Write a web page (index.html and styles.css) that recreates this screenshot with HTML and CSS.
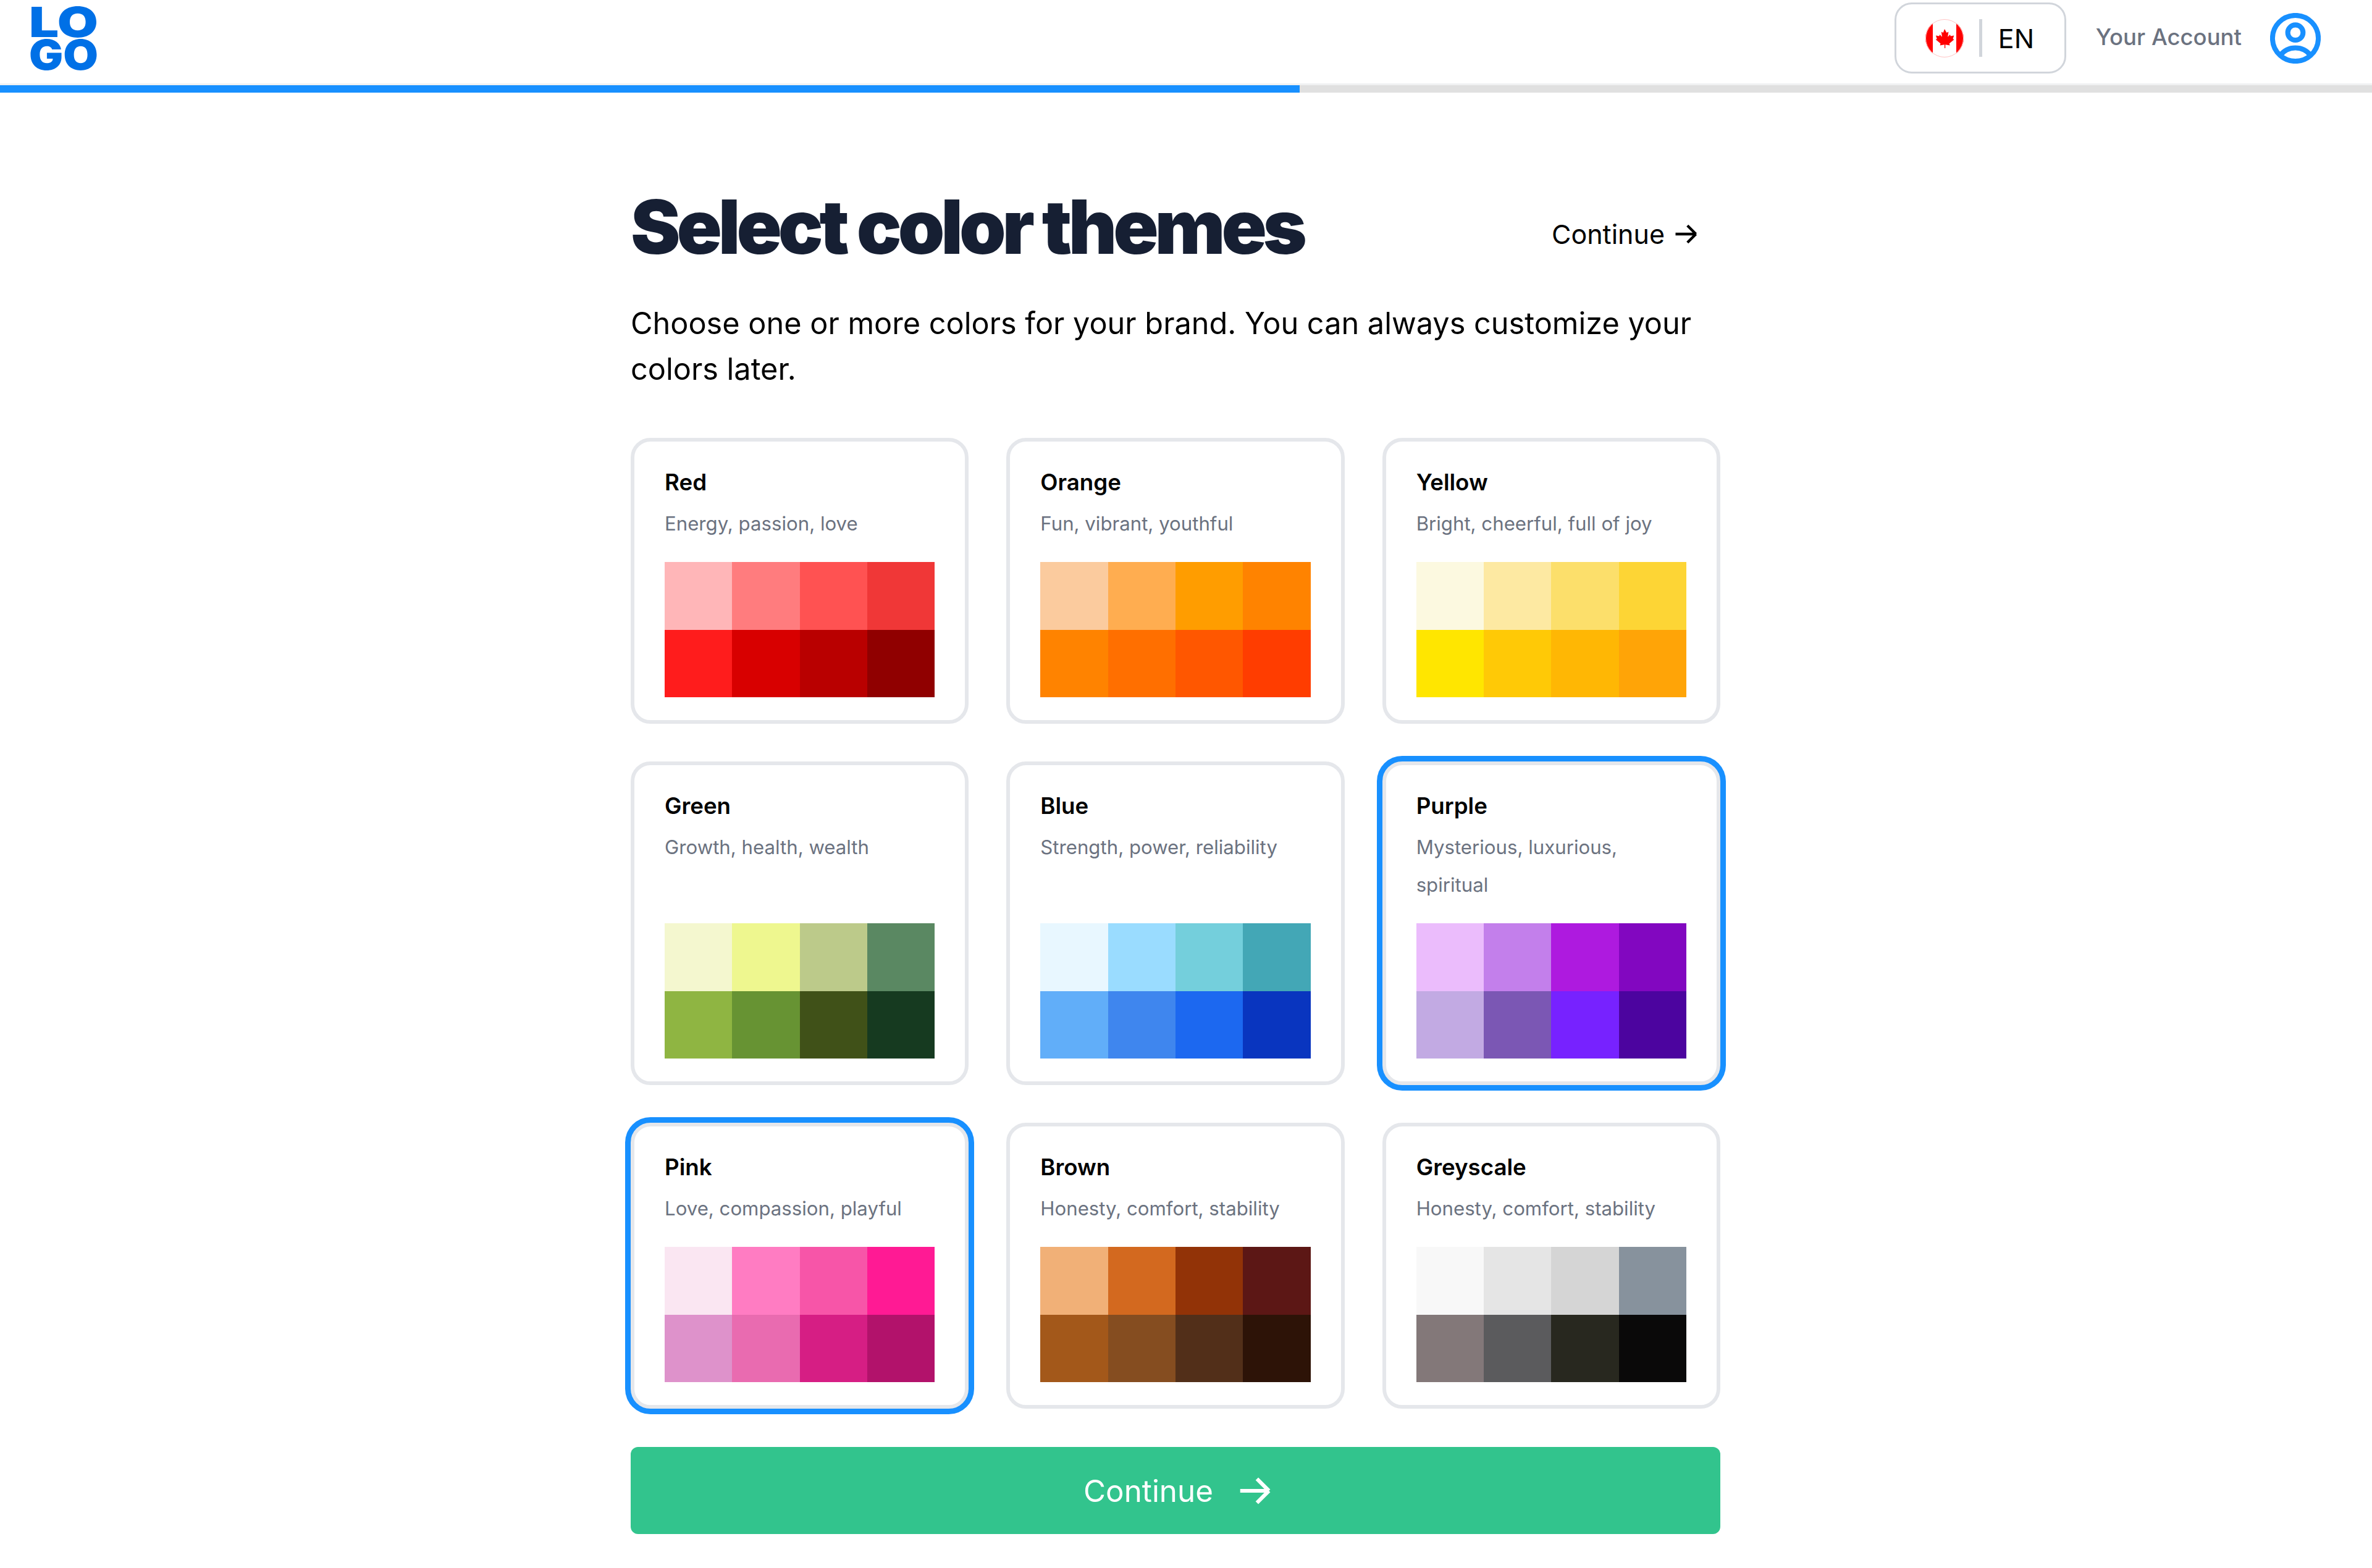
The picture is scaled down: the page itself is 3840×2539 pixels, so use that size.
FILE: index.html
```html
<!DOCTYPE html>
<html lang="en">
<head>
    <meta charset="UTF-8">
    <meta name="viewport" content="width=device-width, initial-scale=1.0">
    <title>Select color themes</title>
    <link rel="stylesheet" href="styles.css">
</head>
<body>
    <header class="topbar">
        <svg class="logo" viewBox="0 0 125 135">
            <text x="6" y="60" textLength="112" lengthAdjust="spacingAndGlyphs">LO</text>
            <text x="6" y="113" textLength="112" lengthAdjust="spacingAndGlyphs">GO</text>
        </svg>
        <div class="topbar__right">
            <button class="lang">
                <svg class="lang__flag" viewBox="0 0 62 62">
                    <defs><clipPath id="flagclip"><circle cx="31" cy="31" r="31"/></clipPath></defs>
                    <g clip-path="url(#flagclip)">
                        <rect width="62" height="62" fill="#fff"/>
                        <rect width="12" height="62" fill="#f00"/>
                        <rect x="50" width="12" height="62" fill="#f00"/>
                    </g>
                    <circle cx="31" cy="31" r="30.5" fill="none" stroke="#ffc4c4" stroke-width="1"/>
                    <path fill="#f00" d="M31 16l3.4 6 3-1.5-1.2 8.2 3.7-3.6 1 2.4 5.4-1-1.8 5.6 2 1-7.800 6.500.9 2.800-7.300-1.100v5.700h-1.400v-5.700l-7.300 1.100.9-2.800-7.800-6.500 2-1-1.800-5.600 5.400 1 1-2.400 3.700 3.600-1.200-8.200 3 1.500z"/>
                </svg>
                <span class="lang__sep"></span>
                <span class="lang__code">EN</span>
            </button>
            <span class="account">Your Account</span>
            <svg class="avatar" viewBox="2.05 2.05 19.9 19.9" fill="none" stroke="#1890ff" stroke-width="1.95">
                <path d="M17.982 18.725A7.488 7.488 0 0012 15.75a7.488 7.488 0 00-5.982 2.975m11.964 0a9 9 0 10-11.963 0m11.963 0A8.966 8.966 0 0112 21a8.966 8.966 0 01-5.982-2.275M15 9.750a3 3 0 11-6 0 3 3 0 016 0z"/>
            </svg>
        </div>
    </header>
    <div class="progress"><div class="progress__bar"></div></div>

    <main class="content">
        <div class="content__head">
            <h1>Select color themes</h1>
            <a class="skip">Continue
                <svg viewBox="0 0 24 24" fill="none" stroke="currentColor" stroke-width="2.4"><path d="M13.5 4.5L21 12m0 0l-7.500 7.500M21 12H3"/></svg>
            </a>
        </div>
        <p class="lead">Choose one or more colors for your brand. You can always customize your colors later.</p>

        <div class="themes">
            <div class="theme theme--red">
                <h3>Red</h3>
                <p>Energy, passion, love</p>
                <div class="swatch"><i></i><i></i><i></i><i></i><i></i><i></i><i></i><i></i></div>
            </div>
            <div class="theme theme--orange">
                <h3>Orange</h3>
                <p>Fun, vibrant, youthful</p>
                <div class="swatch"><i></i><i></i><i></i><i></i><i></i><i></i><i></i><i></i></div>
            </div>
            <div class="theme theme--yellow">
                <h3>Yellow</h3>
                <p>Bright, cheerful, full of joy</p>
                <div class="swatch"><i></i><i></i><i></i><i></i><i></i><i></i><i></i><i></i></div>
            </div>
            <div class="theme theme--green">
                <h3>Green</h3>
                <p>Growth, health, wealth</p>
                <div class="swatch"><i></i><i></i><i></i><i></i><i></i><i></i><i></i><i></i></div>
            </div>
            <div class="theme theme--blue">
                <h3>Blue</h3>
                <p>Strength, power, reliability</p>
                <div class="swatch"><i></i><i></i><i></i><i></i><i></i><i></i><i></i><i></i></div>
            </div>
            <div class="theme theme--purple selected">
                <h3>Purple</h3>
                <p>Mysterious, luxurious, spiritual</p>
                <div class="swatch"><i></i><i></i><i></i><i></i><i></i><i></i><i></i><i></i></div>
            </div>
            <div class="theme theme--pink selected">
                <h3>Pink</h3>
                <p>Love, compassion, playful</p>
                <div class="swatch"><i></i><i></i><i></i><i></i><i></i><i></i><i></i><i></i></div>
            </div>
            <div class="theme theme--brown">
                <h3>Brown</h3>
                <p>Honesty, comfort, stability</p>
                <div class="swatch"><i></i><i></i><i></i><i></i><i></i><i></i><i></i><i></i></div>
            </div>
            <div class="theme theme--grey">
                <h3>Greyscale</h3>
                <p>Honesty, comfort, stability</p>
                <div class="swatch"><i></i><i></i><i></i><i></i><i></i><i></i><i></i><i></i></div>
            </div>
        </div>

        <button class="continue">Continue
            <svg viewBox="0 0 24 24" fill="none" stroke="currentColor" stroke-width="2.4"><path d="M13.5 4.500L21 12m0 0l-7.500 7.500M21 12H3"/></svg>
        </button>
    </main>
</body>
</html>
```

FILE: styles.css
```css
* {
    box-sizing: border-box;
}
body {
    margin: 0;
    background: #ffffff;
    font-family: "Inter", "Liberation Sans", sans-serif;
    color: #000000;
}
.topbar {
    height: 135px;
    display: flex;
    align-items: flex-start;
    justify-content: space-between;
    padding: 0 83px 0 41px;
}
.logo {
    width: 125px;
    height: 135px;
    font-size: 68px;
    font-weight: 900;
    fill: #0070e6;
}
.topbar__right {
    display: flex;
    align-items: center;
    padding-top: 4px;
}
.lang {
    width: 278px;
    height: 115px;
    display: flex;
    align-items: center;
    padding: 0 0 0 47px;
    border: 3px solid #d1d5db;
    border-radius: 28px;
    background: #ffffff;
    font-family: inherit;
}
.lang__flag {
    width: 62px;
    height: 62px;
}
.lang__sep {
    width: 5px;
    height: 61px;
    margin: 0 26px 0 25px;
    background: #d1d5db;
}
.lang__code {
    font-size: 43px;
    color: #000000;
}
.account {
    margin: 0 0 3px 48px;
    font-size: 36.5px;
    font-weight: 500;
    color: #6b7280;
}
.avatar {
    width: 82px;
    height: 82px;
    margin-left: 46px;
}
.progress {
    height: 15px;
    border-top: 3px solid #f0f1f2;
    background: #e0e0e0;
}
.progress__bar {
    width: 2104px;
    height: 12px;
    background: #1890ff;
}
.content {
    width: 1764px;
    margin-left: 1021px;
    padding-top: 152px;
}
.content__head {
    display: flex;
    align-items: center;
    justify-content: space-between;
    padding-right: 34px;
}
.content__head h1 {
    margin: 0;
    font-size: 121px;
    line-height: 130px;
    font-weight: 900;
    letter-spacing: -6.1px;
    color: #161f33;
}
.skip {
    display: flex;
    align-items: center;
    gap: 12px;
    margin-top: 23px;
    font-size: 43px;
}
.skip svg {
    width: 44px;
    height: 44px;
}
.lead {
    margin: 55px 0 0;
    font-size: 48.65px;
    line-height: 73.5px;
}
.themes {
    display: grid;
    grid-template-columns: repeat(3, 1fr);
    gap: 61px;
    margin-top: 75px;
}
.theme {
    display: flex;
    flex-direction: column;
    padding: 44px 49px 37px;
    border: 6px solid #e5e7eb;
    border-radius: 32px;
    background: #ffffff;
}
.theme.selected {
    box-shadow: 0 0 0 9px #1890ff;
}
.theme h3 {
    margin: 0 0 15px;
    font-size: 36.7px;
    line-height: 44px;
    font-weight: 600;
}
.theme p {
    margin: 0 0 31px;
    font-size: 31.2px;
    line-height: 61px;
    color: #6b7280;
}
.swatch {
    display: grid;
    grid-template-columns: repeat(4, 1fr);
    grid-template-rows: 109.500px 109.500px;
    margin-top: auto;
}
.continue {
    display: flex;
    align-items: center;
    justify-content: center;
    gap: 36px;
    width: 100%;
    height: 141px;
    margin-top: 62px;
    padding-left: 16px;
    border: none;
    border-radius: 12px;
    background: #32c48d;
    color: #ffffff;
    font-family: inherit;
    font-size: 49.3px;
}
.continue svg {
    width: 62px;
    height: 62px;
}

/* palettes */
.theme--red i:nth-child(1) { background: #ffb6b8; }
.theme--red i:nth-child(2) { background: #ff7c7e; }
.theme--red i:nth-child(3) { background: #ff5252; }
.theme--red i:nth-child(4) { background: #f03737; }
.theme--red i:nth-child(5) { background: #ff1c1c; }
.theme--red i:nth-child(6) { background: #d80000; }
.theme--red i:nth-child(7) { background: #b90000; }
.theme--red i:nth-child(8) { background: #900000; }

.theme--orange i:nth-child(1) { background: #fbcb9e; }
.theme--orange i:nth-child(2) { background: #ffad50; }
.theme--orange i:nth-child(3) { background: #ff9d00; }
.theme--orange i:nth-child(4) { background: #ff8300; }
.theme--orange i:nth-child(5) { background: #ff8300; }
.theme--orange i:nth-child(6) { background: #ff6f00; }
.theme--orange i:nth-child(7) { background: #ff5700; }
.theme--orange i:nth-child(8) { background: #ff3d00; }

.theme--yellow i:nth-child(1) { background: #fcf9e0; }
.theme--yellow i:nth-child(2) { background: #fde9a2; }
.theme--yellow i:nth-child(3) { background: #fcdf6b; }
.theme--yellow i:nth-child(4) { background: #fdd535; }
.theme--yellow i:nth-child(5) { background: #ffe600; }
.theme--yellow i:nth-child(6) { background: #ffc906; }
.theme--yellow i:nth-child(7) { background: #ffb704; }
.theme--yellow i:nth-child(8) { background: #ffa407; }

.theme--green i:nth-child(1) { background: #f4f7cf; }
.theme--green i:nth-child(2) { background: #eef78f; }
.theme--green i:nth-child(3) { background: #bcca8a; }
.theme--green i:nth-child(4) { background: #5a8862; }
.theme--green i:nth-child(5) { background: #8fb542; }
.theme--green i:nth-child(6) { background: #679333; }
.theme--green i:nth-child(7) { background: #405118; }
.theme--green i:nth-child(8) { background: #163a20; }

.theme--blue i:nth-child(1) { background: #e8f7ff; }
.theme--blue i:nth-child(2) { background: #9adcff; }
.theme--blue i:nth-child(3) { background: #74cfdc; }
.theme--blue i:nth-child(4) { background: #43a7b6; }
.theme--blue i:nth-child(5) { background: #61aef9; }
.theme--blue i:nth-child(6) { background: #3f86ee; }
.theme--blue i:nth-child(7) { background: #1c68f0; }
.theme--blue i:nth-child(8) { background: #0935bf; }

.theme--purple i:nth-child(1) { background: #ebbcfc; }
.theme--purple i:nth-child(2) { background: #c37feb; }
.theme--purple i:nth-child(3) { background: #ae1adf; }
.theme--purple i:nth-child(4) { background: #8207c0; }
.theme--purple i:nth-child(5) { background: #c2aae3; }
.theme--purple i:nth-child(6) { background: #7b57b4; }
.theme--purple i:nth-child(7) { background: #7722ff; }
.theme--purple i:nth-child(8) { background: #4c049f; }

.theme--pink i:nth-child(1) { background: #fae6f2; }
.theme--pink i:nth-child(2) { background: #ff7cc2; }
.theme--pink i:nth-child(3) { background: #f755a8; }
.theme--pink i:nth-child(4) { background: #ff1a94; }
.theme--pink i:nth-child(5) { background: #de92cb; }
.theme--pink i:nth-child(6) { background: #e96bb0; }
.theme--pink i:nth-child(7) { background: #d61e84; }
.theme--pink i:nth-child(8) { background: #b2126b; }

.theme--brown i:nth-child(1) { background: #f1b077; }
.theme--brown i:nth-child(2) { background: #d3691f; }
.theme--brown i:nth-child(3) { background: #923307; }
.theme--brown i:nth-child(4) { background: #5c1715; }
.theme--brown i:nth-child(5) { background: #a3581a; }
.theme--brown i:nth-child(6) { background: #854d20; }
.theme--brown i:nth-child(7) { background: #522f19; }
.theme--brown i:nth-child(8) { background: #2d1307; }

.theme--grey i:nth-child(1) { background: #f8f8f8; }
.theme--grey i:nth-child(2) { background: #e5e5e5; }
.theme--grey i:nth-child(3) { background: #d5d5d5; }
.theme--grey i:nth-child(4) { background: #87929d; }
.theme--grey i:nth-child(5) { background: #837879; }
.theme--grey i:nth-child(6) { background: #5b5b5d; }
.theme--grey i:nth-child(7) { background: #28281f; }
.theme--grey i:nth-child(8) { background: #0a0909; }
```
